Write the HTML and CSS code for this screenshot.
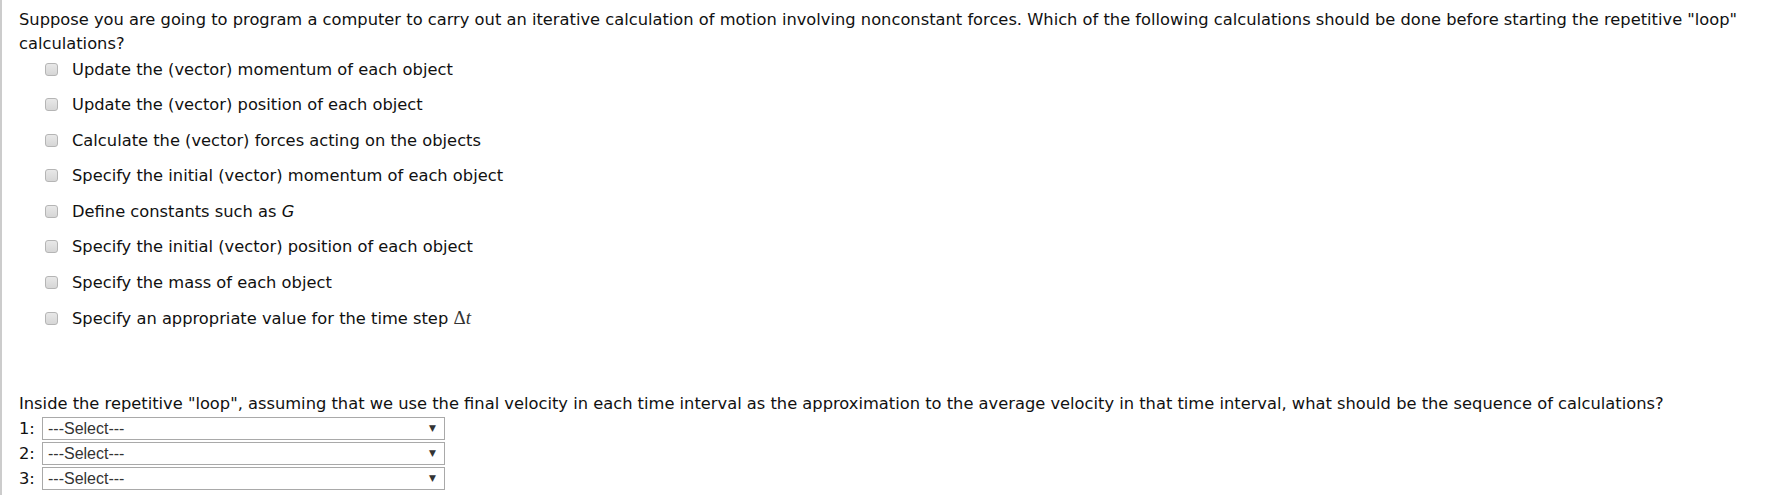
FILE: index.html
```html
<!DOCTYPE html>
<html lang="en">
<head>
    <meta charset="UTF-8">
    <title>Iterative calculation of motion</title>
    <link rel="stylesheet" href="styles.css">
</head>
<body>
    <div class="page">
        <p class="question">Suppose you are going to program a computer to carry out an iterative calculation of motion involving nonconstant forces. Which of the following calculations should be done before starting the repetitive "loop" calculations?</p>
        <ul class="choices">
            <li><label><input type="checkbox"><span>Update the (vector) momentum of each object</span></label></li>
            <li><label><input type="checkbox"><span>Update the (vector) position of each object</span></label></li>
            <li><label><input type="checkbox"><span>Calculate the (vector) forces acting on the objects</span></label></li>
            <li><label><input type="checkbox"><span>Specify the initial (vector) momentum of each object</span></label></li>
            <li><label><input type="checkbox"><span>Define constants such as <i>G</i></span></label></li>
            <li><label><input type="checkbox"><span>Specify the initial (vector) position of each object</span></label></li>
            <li><label><input type="checkbox"><span>Specify the mass of each object</span></label></li>
            <li><label><input type="checkbox"><span>Specify an appropriate value for the time step <span class="math">&Delta;<i>t</i></span></span></label></li>
        </ul>

        <p class="question second">Inside the repetitive "loop", assuming that we use the final velocity in each time interval as the approximation to the average velocity in that time interval, what should be the sequence of calculations?</p>
        <div class="sequence">
            <div class="step"><span class="num">1:</span><span class="select-wrap"><select><option>---Select---</option></select></span></div>
            <div class="step"><span class="num">2:</span><span class="select-wrap"><select><option>---Select---</option></select></span></div>
            <div class="step"><span class="num">3:</span><span class="select-wrap"><select><option>---Select---</option></select></span></div>
        </div>
    </div>
</body>
</html>
```

FILE: styles.css
```css
body { margin: 0; background-color: #fff; color: #111; font-family: "DejaVu Sans", Verdana, sans-serif; font-size: 16.3px; }
.page { min-height: 495px; box-sizing: border-box; border-left: 2px solid #ccc; padding: 8px 10px 0 17px; }
.question { margin: 0; line-height: 24px; }
.question.second { margin-top: 65px; line-height: 22px; }

/* checkbox list */
.choices { list-style: none; margin: 3px 0 0 0; padding: 0 0 0 26px; }
.choices li { height: 20px; margin-bottom: 15.6px; }
.choices label { display: flex; align-items: center; height: 20px; gap: 14px; }
.choices input { appearance: none; -webkit-appearance: none; margin: 0; width: 13px; height: 13px; border: 1px solid #b5b5b5; border-radius: 3px; background: linear-gradient(#e8e8e8, #d6d6d6); box-sizing: border-box; }
.math { font-family: "Liberation Serif", serif; font-size: 19px; color: #333; }
.math i { font-style: italic; }

/* dropdown rows */
.sequence { margin-top: 1px; }
.step { display: flex; align-items: center; height: 25px; }
.num { width: 23px; }
.select-wrap { position: relative; display: inline-block; }
.select-wrap::after { content: "\25BC"; position: absolute; right: 9px; top: 6px; font-size: 9px; color: #333; pointer-events: none; }
select { appearance: none; -webkit-appearance: none; width: 403px; height: 23px; margin: 0; padding: 0 0 0 5px; border: 1px solid #a9a9a9; border-radius: 0; background: #fff; color: #333; font-family: "Liberation Sans", Arial, sans-serif; font-size: 16px; }
```
